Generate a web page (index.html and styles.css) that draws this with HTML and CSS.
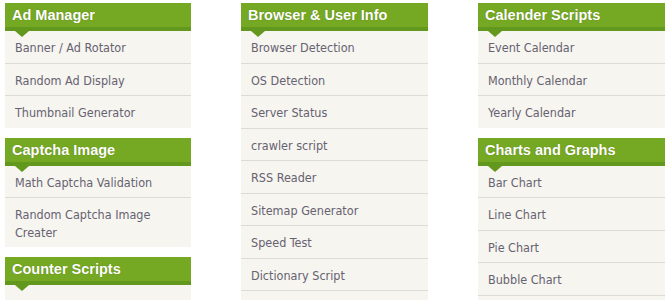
FILE: index.html
```html
<!DOCTYPE html>
<html>
<head>
<meta charset="utf-8">
<link rel="stylesheet" href="styles.css">
</head>
<body>
<div class="grid">
  <div class="col">
    <div class="section">
      <div class="head">Ad Manager</div>
      <ul class="list">
        <li>Banner / Ad Rotator</li>
        <li>Random Ad Display</li>
        <li>Thumbnail Generator</li>
      </ul>
    </div>
    <div class="section">
      <div class="head">Captcha Image</div>
      <ul class="list">
        <li>Math Captcha Validation</li>
        <li>Random Captcha Image Creater</li>
      </ul>
    </div>
    <div class="section">
      <div class="head">Counter Scripts</div>
      <ul class="list cont"></ul>
    </div>
  </div>
  <div class="col">
    <div class="section">
      <div class="head">Browser &amp; User Info</div>
      <ul class="list cont">
        <li>Browser Detection</li>
        <li>OS Detection</li>
        <li>Server Status</li>
        <li>crawler script</li>
        <li>RSS Reader</li>
        <li>Sitemap Generator</li>
        <li>Speed Test</li>
        <li>Dictionary Script</li>
      </ul>
    </div>
  </div>
  <div class="col">
    <div class="section">
      <div class="head">Calender Scripts</div>
      <ul class="list">
        <li>Event Calendar</li>
        <li>Monthly Calendar</li>
        <li>Yearly Calendar</li>
      </ul>
    </div>
    <div class="section">
      <div class="head">Charts and Graphs</div>
      <ul class="list cont">
        <li>Bar Chart</li>
        <li>Line Chart</li>
        <li>Pie Chart</li>
        <li>Bubble Chart</li>
      </ul>
    </div>
  </div>
</div>
</body>
</html>
```
FILE: styles.css
```css
html, body {
  margin: 0;
  padding: 0;
  background: #ffffff;
  overflow: hidden;
}
body {
  height: 300px;
  padding: 3px 5px 0;
  box-sizing: border-box;
  font-family: "DejaVu Sans Condensed", "DejaVu Sans", sans-serif;
}
.grid {
  display: grid;
  grid-template-columns: 186px 187px 187px;
  column-gap: 50px;
  align-items: start;
}
.col {
  display: flex;
  flex-direction: column;
  gap: 10px;
}
.head {
  height: 24px;
  line-height: 24px;
  background: #76a923;
  border-bottom: 4px solid #62981e;
  color: #ffffff;
  font-family: "Liberation Sans", Arial, sans-serif;
  font-weight: bold;
  font-size: 14.5px;
  padding-left: 7px;
  text-shadow: 0 0 1px rgba(60, 90, 10, 0.6);
  position: relative;
}
.head::after {
  content: "";
  position: absolute;
  left: 10px;
  top: 28px;
  width: 0;
  height: 0;
  border-left: 7px solid transparent;
  border-right: 7px solid transparent;
  border-top: 6px solid #62981e;
}
.list {
  list-style: none;
  margin: 0;
  padding: 0;
  background: #f6f5f0;
}
.list.cont {
  padding-bottom: 24px;
}
.list li {
  padding: 8px 10px 6px;
  line-height: 17.5px;
  font-size: 12.5px;
  color: #676270;
}
.list li + li {
  border-top: 1px solid #dcdcd7;
}
.list.cont li:last-child {
  border-bottom: 1px solid #dcdcd7;
}
```
